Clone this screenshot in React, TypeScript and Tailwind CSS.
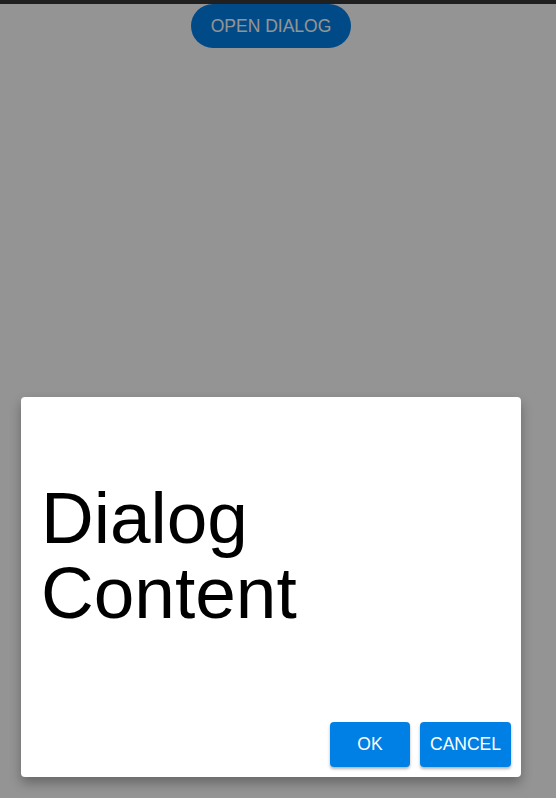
export default function App() {
  return (
    <div className="relative h-[798px] w-full overflow-hidden bg-white font-['Liberation_Sans',Arial,sans-serif]">
      <div className="h-[4px] w-full bg-[#383838]" />
      <div className="pl-[191px]">
        <button
          type="button"
          className="flex h-[44px] w-[160px] items-center justify-center rounded-full bg-[#0080e8] text-[17.5px] text-white"
        >
          OPEN DIALOG
        </button>
      </div>

      {/* overlay */}
      <div className="absolute inset-0 bg-black/[0.42]" />
      <div className="absolute top-0 left-0 h-[4px] w-full bg-[#202020]" />

      <div className="absolute bottom-[21px] left-[21px] flex h-[380px] w-[500px] flex-col rounded-[4px] bg-white shadow-[0_6px_12px_rgba(0,0,0,0.3)]">
        <div className="flex flex-1 items-center pl-[20px]">
          <p className="text-[73px] leading-[75px] text-black">
            Dialog
            <br />
            Content
          </p>
        </div>
        <div className="flex justify-end gap-[10px] p-[10px]">
          <button
            type="button"
            className="h-[45px] min-w-[80px] rounded-[4px] bg-[#0080e5] px-[10px] text-[17.5px] text-white shadow-[0_2px_3px_rgba(0,0,0,0.3)]"
          >
            OK
          </button>
          <button
            type="button"
            className="h-[45px] min-w-[80px] rounded-[4px] bg-[#0080e5] px-[10px] text-[17.5px] text-white shadow-[0_2px_3px_rgba(0,0,0,0.3)]"
          >
            CANCEL
          </button>
        </div>
      </div>
    </div>
  );
}
